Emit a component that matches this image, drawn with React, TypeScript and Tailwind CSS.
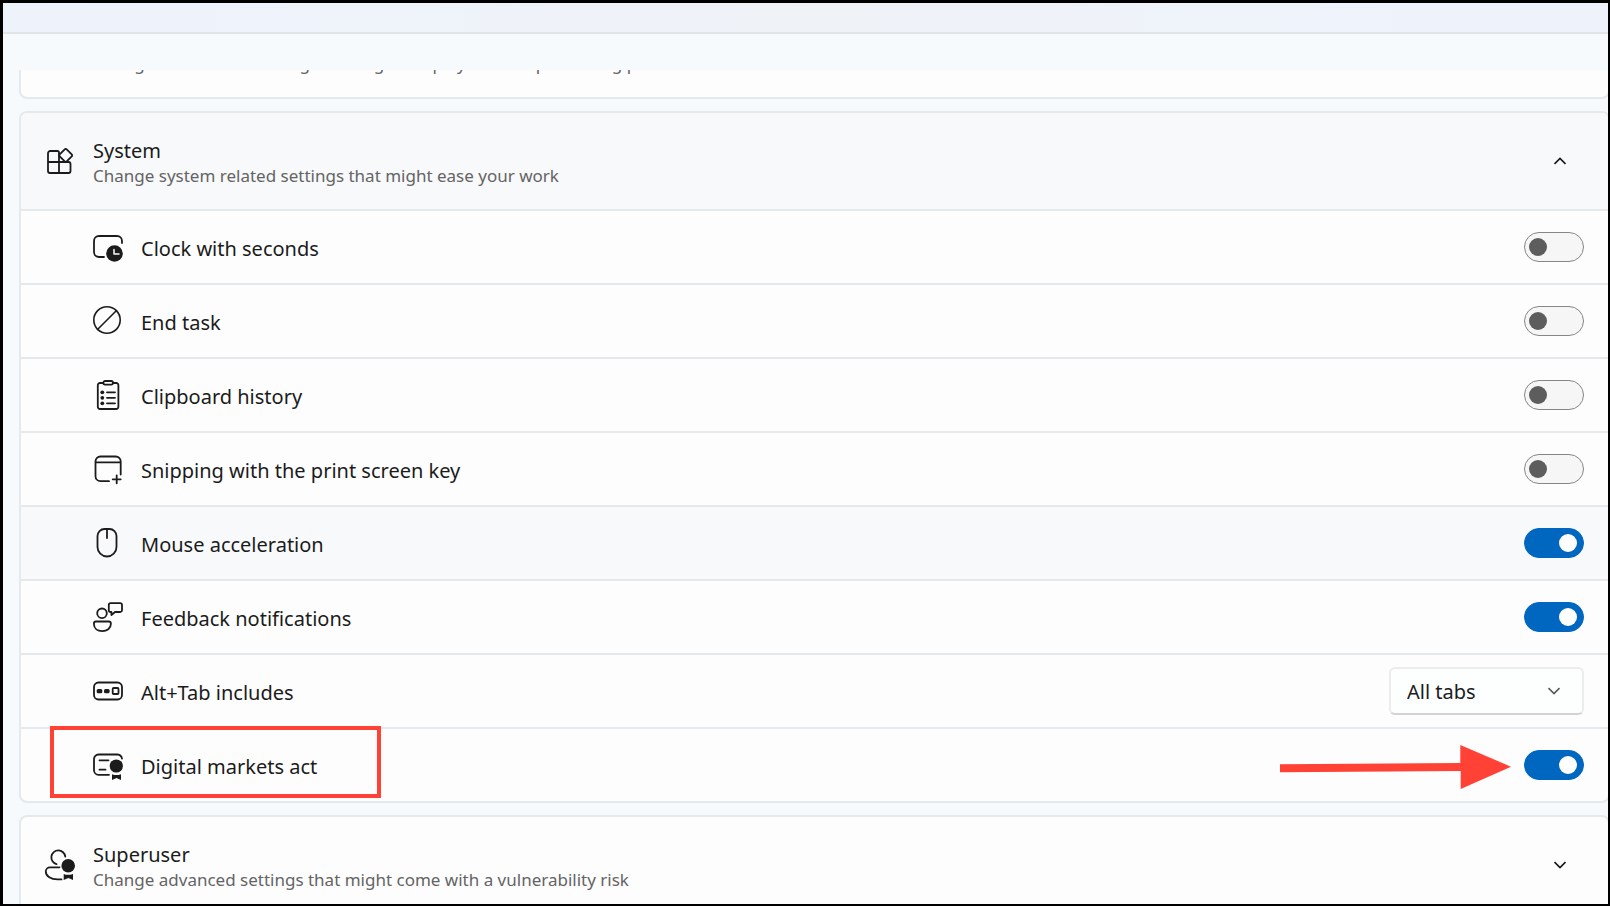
import { useState } from "react";
import type { ReactNode } from "react";
import clsx from "clsx";

const Icon = ({ children }: { children: ReactNode }) => (
  <svg
    className="h-[30px] w-[30px] shrink-0 overflow-visible text-[#1b1b1b]"
    viewBox="0 0 30 30"
    fill="none"
    stroke="currentColor"
    strokeWidth="1.8"
    strokeLinecap="round"
    strokeLinejoin="round"
    aria-hidden="true"
  >
    {children}
  </svg>
);

const AppsIcon = () => (
  <Icon>
    <path d="M14 16V6.5a1.5 1.5 0 0 0-1.5-1.5h-7A2.5 2.5 0 0 0 3 7.5V25a2 2 0 0 0 2 2h18.5a2 2 0 0 0 2-2v-7a2 2 0 0 0-2-2H3M14 16v11" />
    <path d="M19.7 3.4a1.400 1.400 0 0 1 2 0l5 5a1.400 1.400 0 0 1 0 2l-5 5a1.400 1.400 0 0 1-2 0l-5-5a1.400 1.400 0 0 1 0-2z" />
  </Icon>
);

const ClockIcon = () => (
  <Icon>
    <path d="M29 11V9a5 5 0 0 0-5-5H6a5 5 0 0 0-5 5v11a5 5 0 0 0 5 5h5" />
    <circle cx="21.5" cy="21.5" r="8.3" fill="currentColor" stroke="none" />
    <path d="M21 17.5V22h5" stroke="#fcfdfe" strokeWidth="1.5" />
  </Icon>
);

const BlockedIcon = () => (
  <Icon>
    <circle cx="14" cy="14" r="13.2" strokeWidth="1.6" />
    <path d="M4.500 23.500L23.500 4.500" strokeWidth="1.6" />
  </Icon>
);

const ClipboardIcon = () => (
  <Icon>
    <path d="M10 3H7a2.200 2.200 0 0 0-2.200 2.200v21.600A2.200 2.200 0 0 0 7 29h16.200a2.200 2.200 0 0 0 2.200-2.200V5.200A2.200 2.200 0 0 0 23.200 3h-3" />
    <rect x="10.3" y="1" width="9.7" height="3.6" rx="1.8" />
    <path d="M14 12.300h8M14 17.800h8M14 23.300h8" />
    <g fill="currentColor" stroke="none">
      <circle cx="9.3" cy="12.3" r="1.9" />
      <circle cx="9.3" cy="17.8" r="1.9" />
      <circle cx="9.3" cy="23.3" r="1.9" />
    </g>
  </Icon>
);

const SnipIcon = () => (
  <Icon>
    <path d="M27.700 20.500V7.500a5 5 0 0 0-5-5H7.500a5 5 0 0 0-5 5v14.700a5 5 0 0 0 5 5h8.500M2.500 8.300h25" />
    <path d="M23.700 21.300v8M19.700 25.300h8" />
  </Icon>
);

const MouseIcon = () => (
  <Icon>
    <path d="M4.500 8a7 7 0 0 1 7-7h5a7 7 0 0 1 7 7v11a9.500 9.500 0 0 1-19 0z" />
    <path d="M14 1v9" />
  </Icon>
);

const FeedbackIcon = () => (
  <Icon>
    <circle cx="9" cy="11.3" r="4.8" />
    <path d="M3 19.500h12.700a2.200 2.200 0 0 1 2.200 2.200c0 4.800-4 7.400-8.600 7.400S.900 26.500.900 21.700A2.200 2.200 0 0 1 3 19.500z" />
    <path d="M17.600 1.100h9.600A1.800 1.800 0 0 1 29 2.900V8.200A1.800 1.800 0 0 1 27.200 10h-5.200l-3.600 3v-3h-.8a1.800 1.800 0 0 1-1.800-1.800V2.900a1.800 1.800 0 0 1 1.800-1.800z" />
  </Icon>
);

const AltTabIcon = () => (
  <Icon>
    <rect x="1" y="6.5" width="28" height="17" rx="4.5" />
    <rect x="3.7" y="13" width="5.6" height="4.2" rx="1.5" fill="currentColor" stroke="none" />
    <rect x="11" y="13" width="5.6" height="4.2" rx="1.5" fill="currentColor" stroke="none" />
    <rect x="19.7" y="12" width="5.8" height="6" rx="1" />
  </Icon>
);

const CertificateIcon = () => (
  <Icon>
    <path d="M29 8.700a5 5 0 0 0-4.500-4.200H5.500A4.500 4.500 0 0 0 1 9v11.300a4.500 4.500 0 0 0 4.500 4.500h10.500M6.500 10.300h9M6.500 19.700h6" />
    <circle cx="23.3" cy="16" r="6.6" fill="currentColor" stroke="none" />
    <path d="M19 24.200c2.800 1.200 5.800 1.200 9 0V30l-4.500-2L19 30z" fill="currentColor" stroke="none" />
  </Icon>
);

const SuperuserIcon = () => (
  <Icon>
    <path d="M11.500 14.200a7 7 0 1 1 8.800-7.600" />
    <path d="M14.500 17.300H5a4.200 4.200 0 0 0-4.200 4.200c0 4.800 5.200 7.900 11.700 7.900h4" />
    <circle cx="23.2" cy="15.7" r="6.8" fill="currentColor" stroke="none" />
    <path d="M18.700 23.900c2.800 1.200 5.800 1.200 9.300 0v6.200l-4.600-2.200-4.700 2.200z" fill="currentColor" stroke="none" />
  </Icon>
);

const Chevron = ({ up, className }: { up?: boolean; className?: string }) => (
  <svg className={clsx("h-3 w-3 shrink-0", className)} viewBox="0 0 12 12" fill="none" stroke="currentColor" strokeWidth="1.7" aria-hidden="true">
    <path d={up ? "M.5 9L6 3.500l5.500 5.500" : "M.5 3L6 8.500l5.500-5.500"} />
  </svg>
);

type SectionHeaderProps = {
  icon: ReactNode;
  title: string;
  description: string;
  open?: boolean;
};

const SectionHeader = ({ icon, title, description, open }: SectionHeaderProps) => (
  <button type="button" aria-expanded={!!open} className={clsx("flex h-24 w-full items-center gap-[18px] pl-6 pr-[42px] text-left", open && "bg-[#f8f9fb]")}>
    {icon}
    <span className="flex flex-1 flex-col pt-1">
      <span className="text-[20px] leading-[26px]">{title}</span>
      <span className="text-[17px] leading-6 text-[#646464]">{description}</span>
    </span>
    <Chevron up={open} />
  </button>
);

const Card = ({ className, children }: { className?: string; children: ReactNode }) => (
  <section className={clsx("-mr-0.5 shrink-0 overflow-hidden rounded-lg border-2 border-[#e6e9ec] bg-[#fdfdfe]", className)}>{children}</section>
);

type SettingRowProps = {
  id: string;
  label: string;
  icon: ReactNode;
  active?: boolean;
  children: ReactNode;
};

const SettingRow = ({ id, label, icon, active, children }: SettingRowProps) => (
  <div className={clsx("relative flex h-[74px] items-center gap-[18px] border-t-2 border-[#e6e9ec] pl-[72px] pr-6", active && "bg-[#f8f9fb]")}>
    {icon}
    <label htmlFor={id} className="flex-1 pt-1 text-[20px] leading-7">
      {label}
    </label>
    {children}
  </div>
);

const Toggle = ({ id, defaultChecked }: { id: string; defaultChecked: boolean }) => {
  const [checked, setChecked] = useState(defaultChecked);

  return (
    <input
      id={id}
      type="checkbox"
      role="switch"
      checked={checked}
      onChange={(e) => setChecked(e.target.checked)}
      className="block h-[30px] w-[60px] shrink-0 appearance-none rounded-full border border-[#868686] bg-[#f6f6f6] before:my-[5px] before:ml-1 before:block before:h-[18px] before:w-[18px] before:rounded-full before:bg-[#5d5d5d] checked:border-[#0067c0] checked:bg-[#0067c0] checked:before:ml-[34px] checked:before:bg-white"
    />
  );
};

const toggles = [
  { id: "clock", label: "Clock with seconds", icon: <ClockIcon />, on: false },
  { id: "end-task", label: "End task", icon: <BlockedIcon />, on: false },
  { id: "clipboard", label: "Clipboard history", icon: <ClipboardIcon />, on: false },
  { id: "snipping", label: "Snipping with the print screen key", icon: <SnipIcon />, on: false },
  { id: "mouse", label: "Mouse acceleration", icon: <MouseIcon />, on: true, active: true },
  { id: "feedback", label: "Feedback notifications", icon: <FeedbackIcon />, on: true },
];

export default function App() {
  return (
    <div className="flex h-screen flex-col overflow-hidden border-b-2 border-l-3 border-r-2 border-t-3 border-black bg-[#f6fafd] font-['Noto_Sans',sans-serif] text-[#1b1b1b]">
      <header className="h-[31px] shrink-0 border-b-2 border-[#e1e4e9] bg-linear-to-r from-[#eef2fb] via-[#eff3f8] to-[#eef2fb]" />

      <main className="mt-9 flex min-h-0 flex-1 flex-col gap-3 overflow-hidden pl-4">
        {/* scrolled mostly out of view */}
        <Card className="-mt-5">
          <p className="pb-[21px] pl-[72px] text-[17px] leading-6 text-[#646464]">Change customized settings relating to display without presenting power</p>
        </Card>

        <Card>
          <SectionHeader icon={<AppsIcon />} title="System" description="Change system related settings that might ease your work" open />

          {toggles.map((item) => (
            <SettingRow key={item.id} id={item.id} label={item.label} icon={item.icon} active={item.active}>
              <Toggle id={item.id} defaultChecked={item.on} />
            </SettingRow>
          ))}

          <SettingRow id="alt-tab" label="Alt+Tab includes" icon={<AltTabIcon />}>
            <div className="relative">
              <select
                id="alt-tab"
                className="h-12 w-[195px] appearance-none rounded-md border-2 border-[#ececec] border-b-[#d2d3d4] bg-[#fdfefe] pl-4 pr-10 pt-0.5 text-[20px]"
              >
                <option>All tabs</option>
              </select>
              <Chevron className="pointer-events-none absolute right-6 top-[18px] text-[#5d5d5d]" />
            </div>
          </SettingRow>

          <SettingRow id="dma" label="Digital markets act" icon={<CertificateIcon />}>
            <div className="pointer-events-none absolute -top-[3px] left-[29px] h-[72px] w-[331px] border-4 border-[#ff4136]" />
            <svg className="pointer-events-none absolute right-[97px] top-4 h-11 w-[231px]" viewBox="0 0 231 44" fill="#ff4136" aria-hidden="true">
              <path d="M0 19.200L180.300 18V0L231 21.700 180.700 44V26L0 27.300z" />
            </svg>
            <Toggle id="dma" defaultChecked />
          </SettingRow>
        </Card>

        <Card>
          <SectionHeader icon={<SuperuserIcon />} title="Superuser" description="Change advanced settings that might come with a vulnerability risk" />
        </Card>
      </main>
    </div>
  );
}
